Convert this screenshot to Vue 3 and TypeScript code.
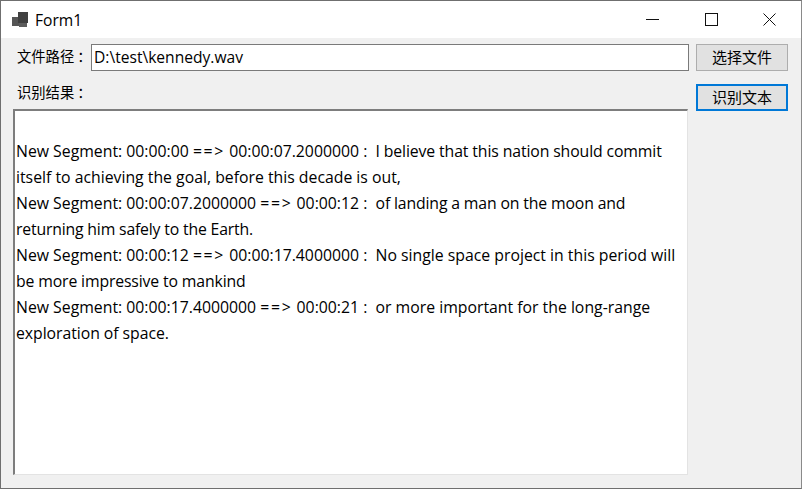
<template>
  <div class="window">
    <div class="titlebar">
      <svg class="app-icon" width="16" height="16" viewBox="0 0 16 16">
        <rect x="0" y="5" width="7" height="9" fill="#555" />
        <rect x="6" y="0" width="10" height="11" fill="#404040" />
        <rect x="7" y="11" width="8" height="4" fill="#5c5c5c" />
      </svg>
      <span class="title">Form1</span>
      <div class="controls">
        <button class="ctl">
          <svg width="13" height="13" viewBox="0 0 13 13"><path d="M0 6.5H13" stroke="#111" fill="none" /></svg>
        </button>
        <button class="ctl">
          <svg width="13" height="13" viewBox="0 0 13 13"><rect x="0.5" y="0.5" width="12" height="12" stroke="#111" fill="none" /></svg>
        </button>
        <button class="ctl">
          <svg width="13" height="13" viewBox="0 0 13 13"><path d="M0.5 0.5L12.5 12.5M12.5 0.5L0.5 12.5" stroke="#111" fill="none" /></svg>
        </button>
      </div>
    </div>
    <div class="body">
      <div class="left">
        <div class="path-row">
          <label class="label">文件路径<span class="colon">：</span></label>
          <div class="input">D:\test\kennedy.wav</div>
        </div>
        <div class="label result-label">识别结果<span class="colon">：</span></div>
        <div class="result">
          <div class="line">&nbsp;</div>
          <div v-for="(seg, i) in segments" :key="i">
            <div class="line">
              New Segment: {{ seg.from }} <span class="arrow">==&gt;</span> {{ seg.to }} :&nbsp;
              <span :style="{ letterSpacing: seg.track + 'px' }">{{ seg.first }}</span>
            </div>
            <div class="line" :style="{ letterSpacing: seg.restTrack + 'px' }">{{ seg.rest }}</div>
          </div>
        </div>
      </div>
      <div class="right">
        <button class="btn">选择文件</button>
        <button class="btn active">识别文本</button>
      </div>
    </div>
  </div>
</template>

<script setup lang="ts">
interface Segment {
  from: string
  to: string
  first: string
  rest: string
  track: number
  restTrack: number
}

const segments: Segment[] = [
  {
    from: '00:00:00',
    to: '00:00:07.2000000',
    first: 'I believe that this nation should commit',
    rest: 'itself to achieving the goal, before this decade is out,',
    track: -0.12,
    restTrack: 0
  },
  {
    from: '00:00:07.2000000',
    to: '00:00:12',
    first: 'of landing a man on the moon and',
    rest: 'returning him safely to the Earth.',
    track: -0.15,
    restTrack: -0.18
  },
  {
    from: '00:00:12',
    to: '00:00:17.4000000',
    first: 'No single space project in this period will',
    rest: 'be more impressive to mankind',
    track: 0,
    restTrack: -0.14
  },
  {
    from: '00:00:17.4000000',
    to: '00:00:21',
    first: 'or more important for the long-range',
    rest: 'exploration of space.',
    track: 0,
    restTrack: -0.05
  }
]
</script>

<style>
html,
body {
  margin: 0;
  background: #f0f0f0;
}
</style>

<style scoped>
.window {
  width: 802px;
  height: 489px;
  box-sizing: border-box;
  border: 1px solid #6f6f6f;
  border-right-color: #8a8a8a;
  background: #f0f0f0;
  display: flex;
  flex-direction: column;
  overflow: hidden;
  font-family: "Open Sans", "Noto Sans CJK SC", sans-serif;
  color: #000;
}
.titlebar {
  height: 37px;
  background: #fff;
  display: flex;
  align-items: center;
  padding-left: 11px;
  flex: none;
}
.app-icon {
  margin-right: 7px;
}
.title {
  font-size: 15.6px;
}
.controls {
  margin-left: auto;
  display: flex;
  margin-right: 2px;
}
.ctl {
  width: 58.5px;
  height: 37px;
  border: 0;
  padding: 0;
  background: transparent;
  display: flex;
  align-items: center;
  justify-content: center;
}
.body {
  flex: 1;
  display: flex;
  gap: 7px;
  padding: 6px 0 13px 12px;
  min-height: 0;
}
.left {
  width: 676px;
  display: flex;
  flex-direction: column;
}
.path-row {
  display: flex;
  align-items: center;
  height: 27px;
}
.label {
  font-size: 14.3px;
  line-height: 20px;
  padding-left: 4px;
}
.colon {
  margin-left: 3px;
}
.path-row .label {
  width: 74px;
  flex: none;
  white-space: nowrap;
  padding-bottom: 1px;
}
.input {
  flex: 1;
  height: 27px;
  box-sizing: border-box;
  border: 1px solid #7a7a7a;
  background: #fff;
  font-size: 15.6px;
  line-height: 25px;
  padding-left: 2px;
}
.result-label {
  margin-top: 12px;
  height: 26px;
}
.result {
  flex: 1;
  min-height: 0;
  box-sizing: border-box;
  background: #fff;
  border-top: 2px solid #7d7d7d;
  border-left: 2px solid #7d7d7d;
  border-right: 1px solid #e3e3e3;
  border-bottom: 1px solid #e3e3e3;
  margin-right: 1px;
  padding: 1px 0 0 1px;
  font-size: 15.8px;
  line-height: 26px;
}
.line {
  white-space: nowrap;
}
.arrow {
  letter-spacing: 1.7px;
}
.right {
  width: 92px;
  display: flex;
  flex-direction: column;
  gap: 13px;
}
.btn {
  height: 27px;
  box-sizing: border-box;
  border: 1px solid #adadad;
  background: #e1e1e1;
  font-family: inherit;
  font-size: 15px;
  color: #000;
  padding: 0 0 3px;
}
.btn.active {
  border: 2px solid #0078d7;
}
</style>
